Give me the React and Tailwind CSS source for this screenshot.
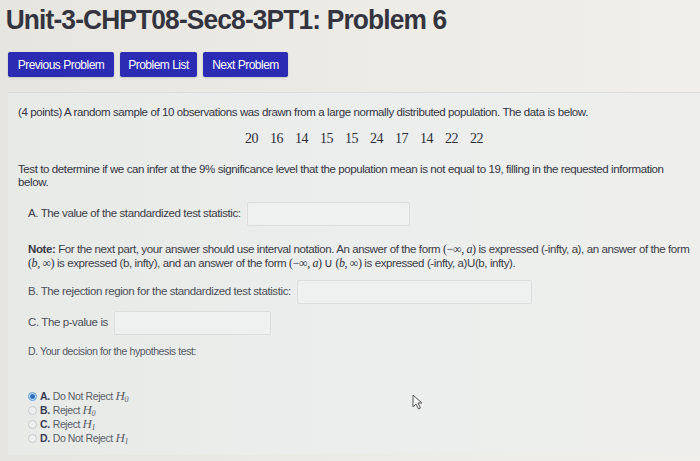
import React from 'react';

const H = ({ sub }) => (
  <span className="font-['Liberation_Serif',serif] italic text-[13px] leading-none">
    H<sub className="text-[8px] leading-none">{sub}</sub>
  </span>
);

const M = ({ children }) => (
  <span className="font-['Liberation_Serif',serif] text-[12px] leading-none whitespace-nowrap text-[#2e3040]">{children}</span>
);

const Opt = ({ checked, letter, children }) => (
  <div className="flex items-center gap-[3px] h-[14px]">
    <span className={`w-[9px] h-[9px] rounded-full border ${checked ? 'border-[#5a9ad8] bg-[#cfe2f5]' : 'border-[#c6c9cc] bg-[#eef0f0]'} flex items-center justify-center`}>
      {checked && <span className="w-[5px] h-[5px] rounded-full bg-[#2a6fc0]" />}
    </span>
    <span className="font-bold text-[#3b3d52]">{letter}.</span>
    <span className="text-[#5b5e66]">{children}</span>
  </div>
);

const Box = ({ w }) => (
  <span className={`inline-block h-[24px] ${w} border border-[#dcdedd] bg-[#eff1f0] rounded-[2px]`} />
);

export default function App() {
  const data = [20, 16, 14, 15, 15, 24, 17, 14, 22, 22];
  return (
    <div className="w-[700px] h-[461px] overflow-hidden bg-gradient-to-r from-[#e6e5df] via-[#ecebe6] to-[#f0efe9] font-['Liberation_Sans',Arial,sans-serif] text-[#3a3b45] relative">
      <h1 className="pl-[6px] pt-[3px] text-[28px] leading-[34px] font-bold tracking-[-0.9px] text-[#34343f] scale-x-[0.94] origin-left">
        Unit-3-CHPT08-Sec8-3PT1: Problem 6
      </h1>
      <div className="flex gap-[6px] pl-[8px] mt-[15px]">
        {['Previous Problem', 'Problem List', 'Next Problem'].map((t, i) => (
          <button key={t} className={`h-[25px] ${i === 0 ? 'w-[106px]' : i === 1 ? 'w-[77px]' : 'w-[85px]'} bg-[#2b2bb4] text-white text-[12px] tracking-[-0.5px] rounded-[2px] shadow-sm`}>
            {t}
          </button>
        ))}
      </div>
      <div className="ml-[8px] mt-[15px] h-[363px] bg-gradient-to-r from-[#e8eae8] via-[#eceeed] to-[#eeefed] border-t border-[#dcdcd8] pl-[10px] pr-[2px] pt-[12px] text-[11.5px] tracking-[-0.4px]">
        <p className="leading-[14px] text-[#33343f]">
          (4 points) A random sample of 10 observations was drawn from a large normally distributed population. The data is below.
        </p>
        <div className="flex gap-[11px] pl-[227px] mt-[9px] font-['Liberation_Serif',serif] text-[14px] text-[#2c2d38] tracking-[-0.5px]">
          {data.map((d, i) => <span key={i} className="w-[14px]">{d}</span>)}
        </div>
        <p className="mt-[14px] pr-[18px] leading-[13px] text-[#33343f]">
          Test to determine if we can infer at the 9% significance level that the population mean is not equal to 19, filling in the requested information below.
        </p>
        <div className="pl-[10px]">
          <div className="flex items-center gap-[6px] mt-[13px]">
            <span>A. The value of the standardized test statistic:</span>
            <Box w="w-[163px]" />
          </div>
          <p className="mt-[16px] leading-[14px] text-[#3a3b45]">
            <span className="font-bold">Note:</span> For the next part, your answer should use interval notation. An answer of the form{' '}
            <M>(−∞, <i>a</i>)</M> is expressed (-infty, a), an answer of the form{' '}
            <M>(<i>b</i>, ∞)</M> is expressed (b, infty), and an answer of the form{' '}
            <M>(−∞, <i>a</i>) ∪ (<i>b</i>, ∞)</M> is expressed (-infty, a)U(b, infty).
          </p>
          <div className="flex items-center gap-[6px] mt-[10px] text-[#4b4d57]">
            <span>B. The rejection region for the standardized test statistic:</span>
            <Box w="w-[235px]" />
          </div>
          <div className="flex items-center gap-[6px] mt-[7px] text-[#4b4d57]">
            <span>C. The p-value is</span>
            <Box w="w-[157px]" />
          </div>
          <div className="mt-[9px] text-[#555862] text-[10.5px]">D. Your decision for the hypothesis test:</div>
          <div className="mt-[30px] text-[10.5px]">
            <Opt checked letter="A">Do Not Reject <H sub="0" /></Opt>
            <Opt letter="B">Reject <H sub="0" /></Opt>
            <Opt letter="C">Reject <H sub="1" /></Opt>
            <Opt letter="D">Do Not Reject <H sub="1" /></Opt>
          </div>
        </div>
      </div>
      <svg className="absolute left-[412px] top-[394px]" width="12" height="16" viewBox="0 0 12 16">
        <path d="M1 1 L1 13 L4 10 L6.5 15 L8.5 14 L6 9 L10 9 Z" fill="#f4f4f4" stroke="#555" strokeWidth="1" />
      </svg>
    </div>
  );
}
